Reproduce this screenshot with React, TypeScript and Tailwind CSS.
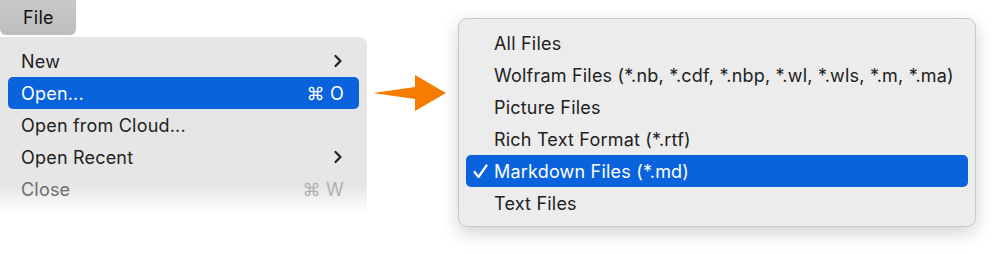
import { ChevronRight } from "lucide-react";

const leftItems = [
  { label: "New", submenu: true },
  { label: "Open...", shortcut: "⌘ O", active: true },
  { label: "Open from Cloud..." },
  { label: "Open Recent", submenu: true },
  { label: "Close", shortcut: "⌘ W", disabled: true },
];

const fileTypes = [
  "All Files",
  "Wolfram Files (*.nb, *.cdf, *.nbp, *.wl, *.wls, *.m, *.ma)",
  "Picture Files",
  "Rich Text Format (*.rtf)",
  "Markdown Files (*.md)",
  "Text Files",
];

export default function App() {
  return (
    <div
      className="w-[998px] h-[254px] bg-white flex text-[18px] tracking-[0.2px] text-[#222]"
      style={{ fontFamily: "Inter, 'Noto Sans', sans-serif" }}
    >
      {/* left menu */}
      <div className="w-[367px] flex flex-col">
        <div className="w-[76px] h-[35px] rounded-b-[6px] bg-gradient-to-b from-[#c9c9c9] to-[#bdbdbd] flex items-center pl-[23px] text-[#111]">
          File
        </div>
        <div className="mt-[2px] h-[175px] rounded-tr-[8px] bg-gradient-to-b from-[#e6e6e6] from-[86%] to-white pt-[8px] px-[8px]">
          {leftItems.map((it) => (
            <div
              key={it.label}
              className={`h-[32px] flex items-center justify-between pl-[13px] pr-[15px] rounded-[5px] ${
                it.active ? "bg-[#0a63dd] text-white" : ""
              } ${it.disabled ? "text-[#6e6e6e]" : ""}`}
            >
              <span>{it.label}</span>
              {it.shortcut && (
                <span className={it.disabled ? "text-[#b0b0b0]" : ""}>{it.shortcut}</span>
              )}
              {it.submenu && <ChevronRight size={20} strokeWidth={2.6} className="mr-[-4px]" />}
            </div>
          ))}
        </div>
      </div>

      {/* arrow */}
      <div className="w-[91px] flex items-start pt-[74px] pl-[6px]">
        <svg width="74" height="38" viewBox="0 0 74 38">
          <polygon points="0,19 42,13 42,1 73,19 42,37 42,25" fill="#f57c00" />
        </svg>
      </div>

      {/* right menu */}
      <div className="mt-[18px] w-[518px] h-[209px] rounded-[9px] bg-[#ececec] border border-[#c8c8c8] shadow-[0_6px_18px_rgba(0,0,0,0.18)] px-[7px] pt-[8px]">
        {fileTypes.map((f, i) => {
          const active = i === 4;
          return (
            <div
              key={f}
              className={`h-[32px] flex items-center rounded-[5px] pl-[28px] relative ${
                active ? "bg-[#0a63dd] text-white" : ""
              }`}
            >
              {active && (
                <svg className="absolute left-[7px] top-[9px]" width="15" height="15" viewBox="0 0 15 15">
                  <path d="M1.5 8 L5.5 13 L13.5 1.5" fill="none" stroke="white" strokeWidth="2.2" strokeLinecap="round" strokeLinejoin="round" />
                </svg>
              )}
              {f}
            </div>
          );
        })}
      </div>
    </div>
  );
}
